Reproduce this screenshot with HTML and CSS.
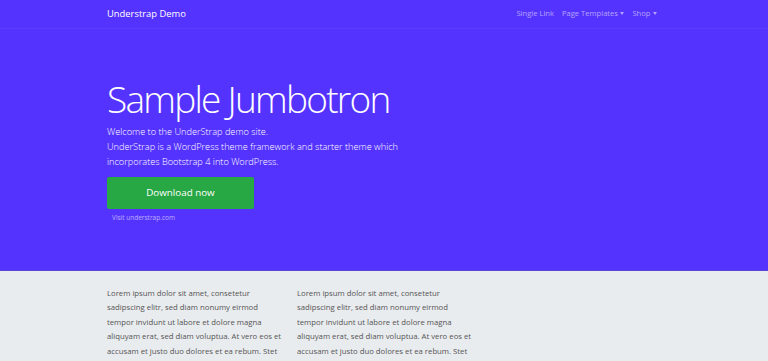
FILE: index.html
```html
<!DOCTYPE html>
<html lang="en">
<head>
<meta charset="utf-8">
<title>Understrap Demo</title>
<link rel="stylesheet" href="styles.css">
</head>
<body>
<nav class="navbar">
  <div class="container nav-inner">
    <a class="brand" href="#">Understrap Demo</a>
    <ul class="nav-links">
      <li><a href="#">Single Link</a></li>
      <li><a href="#" class="dropdown">Page Templates</a></li>
      <li><a href="#" class="dropdown">Shop</a></li>
    </ul>
  </div>
</nav>
<header class="jumbotron">
  <div class="container">
    <h1 class="display">Sample Jumbotron</h1>
    <p class="lead">Welcome to the UnderStrap demo site.<br>UnderStrap is a WordPress theme framework and starter theme which<br>incorporates Bootstrap 4 into WordPress.</p>
    <a class="btn-download" href="#">Download now</a>
    <p class="visit">Visit understrap.com</p>
  </div>
</header>
<section class="content">
  <div class="container grid">
    <p class="col-text">Lorem ipsum dolor sit amet, consetetur sadipscing elitr, sed diam nonumy eirmod tempor invidunt ut labore et dolore magna aliquyam erat, sed diam voluptua. At vero eos et accusam et justo duo dolores et ea rebum. Stet clita kasd gubergren, no sea takimata sanctus est Lorem ipsum dolor sit amet.</p>
    <p class="col-text">Lorem ipsum dolor sit amet, consetetur sadipscing elitr, sed diam nonumy eirmod tempor invidunt ut labore et dolore magna aliquyam erat, sed diam voluptua. At vero eos et accusam et justo duo dolores et ea rebum. Stet clita kasd gubergren, no sea takimata sanctus est Lorem ipsum dolor sit amet.</p>
    <div class="col-empty"></div>
  </div>
</section>
</body>
</html>
```
FILE: styles.css
```css
* { box-sizing: border-box; }
html, body { margin: 0; padding: 0; }
body {
  font-family: "Open Sans", "Noto Sans", sans-serif;
  background: #e9ecef;
  height: 361px;
  overflow: hidden;
}
a { text-decoration: none; }
.container { width: 554px; margin: 0 auto; }

.navbar {
  background: #5533ff;
  height: 29px;
  border-bottom: 1px solid #5c3ffb;
}
.nav-inner {
  display: flex;
  align-items: center;
  justify-content: space-between;
  height: 28px;
}
.brand {
  color: #fff;
  font-size: 9.4px;
  font-weight: 500;
  line-height: 1;
}
.nav-links {
  display: flex;
  align-items: center;
  gap: 8px;
  list-style: none;
  margin: 0;
  padding: 0 4px 0 0;
  font-size: 7.6px;
  line-height: 1;
}
.nav-links a {
  color: rgba(255,255,255,.55);
}
.dropdown::after {
  content: "";
  display: inline-block;
  margin-left: 2.5px;
  vertical-align: 1.5px;
  border-top: 3px solid currentColor;
  border-left: 2.5px solid transparent;
  border-right: 2.5px solid transparent;
}

.jumbotron {
  background: #5533ff;
  height: 242px;
  padding-top: 47px;
  border-bottom: 1px solid #5a45d8;
}
.display {
  margin: 0;
  color: #fff;
  font-weight: 300;
  font-size: 37px;
  line-height: 46px;
  letter-spacing: -1.75px;
}
.lead {
  margin: 1.5px 0 0;
  color: #fff;
  font-size: 9.2px;
  line-height: 15px;
  font-weight: 300;
}
.btn-download {
  display: flex;
  align-items: center;
  justify-content: center;
  width: 147px;
  height: 32px;
  margin-top: 8px;
  background: #28a745;
  color: #fff;
  font-size: 9.8px;
  border-radius: 2px;
}
.visit {
  margin: 4px 0 0 5px;
  color: rgba(255,255,255,.6);
  font-size: 6.5px;
}

.content { padding-top: 15px; }
.grid {
  display: grid;
  grid-template-columns: 176px 176px 1fr;
  column-gap: 14px;
}
.col-text {
  margin: 0;
  color: #555;
  font-size: 7.75px;
  line-height: 14.4px;
}
```
